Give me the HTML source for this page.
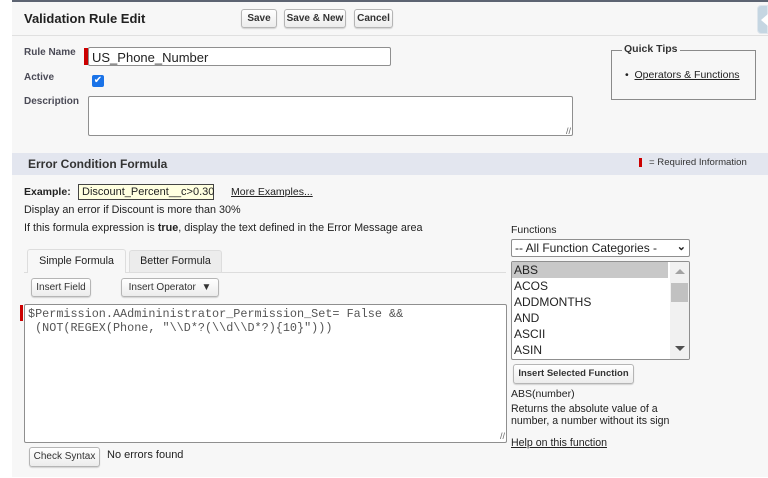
<!DOCTYPE html>
<html><head><style>
*{box-sizing:border-box;margin:0;padding:0}
body{width:768px;height:478px;background:#fff;font-family:"Liberation Sans",Arial,sans-serif;font-size:11px;color:#222;position:relative;overflow:hidden}
.a{position:absolute}
#pg{left:12px;top:0;width:756px;height:477px;background:#f7f7f7}
.btn{position:absolute;border:1px solid #b5b5b5;border-radius:3px;background:linear-gradient(#fff,#ececec);font-size:10px;font-weight:bold;color:#333;text-align:center;box-shadow:0 1px 1px rgba(0,0,0,.15)}
.lbl{position:absolute;font-size:10px;font-weight:bold;color:#4a4a56}
.in{position:absolute;background:#fff;border:1px solid #8f8f8f;border-radius:2px}
u{text-decoration:underline}
</style></head><body>
<div class="a" id="pg"></div>
<div class="a" style="left:12px;top:0;width:756px;height:2px;background:#5d6472"></div>
<div class="a" style="left:12px;top:35px;width:756px;height:1px;background:#e0e0e0"></div>
<div class="a" style="left:24px;top:11px;font-size:13px;font-weight:bold;color:#222">Validation Rule Edit</div>
<div class="btn" style="left:241px;top:9px;width:36px;height:19px;line-height:17px">Save</div>
<div class="btn" style="left:284px;top:9px;width:62px;height:19px;line-height:17px">Save &amp; New</div>
<div class="btn" style="left:354px;top:9px;width:39px;height:19px;line-height:17px">Cancel</div>
<div class="a" style="left:757px;top:5px;width:11px;height:29px;background:#c5d6e2;border:1px solid #dfe6ec;border-radius:4px 0 0 4px"></div>
<div class="a" style="left:761px;top:14px;width:0;height:0;border-top:6px solid transparent;border-bottom:6px solid transparent;border-right:7px solid #fff"></div>

<div class="lbl" style="left:24px;top:47px">Rule Name</div>
<div class="a" style="left:84px;top:48px;width:4px;height:17px;background:#c00"></div>
<div class="in" style="left:88px;top:47px;width:303px;height:19px;font-size:13px;padding:2px 3px;color:#222">US_Phone_Number</div>
<div class="lbl" style="left:24px;top:72px">Active</div>
<div class="a" style="left:92px;top:75px;width:12px;height:12px;background:#1a73e8;border-radius:2px;color:#fff;font-size:10px;line-height:12px;text-align:center">✔</div>
<div class="lbl" style="left:24px;top:96px">Description</div>
<div class="in" style="left:88px;top:96px;width:485px;height:40px"><span class="a" style="right:1px;bottom:-1px;font-size:9px;color:#666">//</span></div>

<div class="a" style="left:611px;top:50px;width:145px;height:50px;border:1px solid #8a8a8a"></div>
<div class="a" style="left:622px;top:43px;background:#f7f7f7;padding:0 2px;font-size:10.5px;font-weight:bold;color:#333">Quick Tips</div>
<div class="a" style="left:625px;top:69px;font-size:10.5px;color:#222">•&nbsp;&nbsp;<u>Operators &amp; Functions</u></div>

<div class="a" style="left:12px;top:153px;width:756px;height:22px;background:#e3e6ef"></div>
<div class="a" style="left:28px;top:157px;font-size:12px;font-weight:bold;color:#333">Error Condition Formula</div>
<div class="a" style="left:639px;top:158px;width:3px;height:9px;background:#c00"></div>
<div class="a" style="left:649px;top:157px;font-size:9.6px;color:#333">= Required Information</div>

<div class="a" style="left:24px;top:186px;font-size:10.5px;font-weight:bold">Example:</div>
<div class="a" style="left:78px;top:184px;width:136px;height:16px;background:#ffffe0;border:1px solid #444;font-size:11px;padding:1px 3px">Discount_Percent__c&gt;0.30</div>
<div class="a" style="left:231px;top:186px;font-size:10.5px"><u>More Examples...</u></div>
<div class="a" style="left:24px;top:204px;font-size:10.8px">Display an error if Discount is more than 30%</div>
<div class="a" style="left:24px;top:222px;font-size:10.8px">If this formula expression is <b>true</b>, display the text defined in the Error Message area</div>

<div class="a" style="left:24px;top:272px;width:482px;height:1px;background:#ddd"></div>
<div class="a" style="left:27px;top:249px;width:99px;height:24px;background:#f7f7f7;border:1px solid #ddd;border-bottom:none;border-radius:3px 3px 0 0;font-size:10.7px;text-align:center;line-height:22px">Simple Formula</div>
<div class="a" style="left:129px;top:250px;width:93px;height:22px;background:#ececec;border:1px solid #ddd;border-bottom:none;border-radius:3px 3px 0 0;font-size:10.7px;text-align:center;line-height:21px">Better Formula</div>
<div class="btn" style="left:31px;top:278px;width:60px;height:19px;line-height:17px;font-weight:normal">Insert Field</div>
<div class="btn" style="left:121px;top:278px;width:98px;height:19px;line-height:17px;font-weight:normal">Insert Operator&nbsp;&nbsp;▼</div>
<div class="a" style="left:20px;top:305px;width:3px;height:16px;background:#c00"></div>
<div class="in" style="left:24px;top:304px;width:483px;height:139px;font-family:'Liberation Mono',monospace;font-size:11.8px;line-height:14px;padding:2px 3px;color:#555;white-space:pre">$Permission.AAdmininistrator_Permission_Set= False &amp;&amp;
 (NOT(REGEX(Phone, "\\D*?(\\d\\D*?){10}")))<span class="a" style="right:1px;bottom:-1px;font-size:9px;color:#666;font-family:'Liberation Sans'">//</span></div>
<div class="btn" style="left:29px;top:447px;width:71px;height:20px;line-height:18px;font-weight:normal">Check Syntax</div>
<div class="a" style="left:107px;top:449px;font-size:11px">No errors found</div>

<div class="a" style="left:511px;top:224px;font-size:10.5px">Functions</div>
<div class="in" style="left:511px;top:239px;width:179px;height:18px;font-size:12px;padding:1px 3px;color:#222">-- All Function Categories -<span class="a" style="right:3px;top:0;font-size:11px;font-weight:bold">⌄</span></div>
<div class="in" style="left:511px;top:261px;width:179px;height:99px;font-size:12px;line-height:16px;overflow:hidden">
<div style="background:#c8c8c8;width:156px;padding-left:2px">ABS</div>
<div style="padding-left:2px">ACOS</div><div style="padding-left:2px">ADDMONTHS</div><div style="padding-left:2px">AND</div><div style="padding-left:2px">ASCII</div><div style="padding-left:2px">ASIN</div>
<div class="a" style="left:158px;top:0;width:19px;height:97px;background:#f1f1f1"></div>
<div class="a" style="left:163px;top:7px;border-left:5px solid transparent;border-right:5px solid transparent;border-bottom:5px solid #a3a3a3"></div>
<div class="a" style="left:159px;top:21px;width:17px;height:19px;background:#c1c1c1"></div>
<div class="a" style="left:163px;top:84px;border-left:5px solid transparent;border-right:5px solid transparent;border-top:5px solid #505050"></div>
</div>
<div class="btn" style="left:513px;top:364px;width:121px;height:20px;line-height:18px;font-size:9.5px">Insert Selected Function</div>
<div class="a" style="left:511px;top:388px;font-size:10.5px">ABS(number)</div>
<div class="a" style="left:511px;top:403px;font-size:10.6px;line-height:12px">Returns the absolute value of a<br>number, a number without its sign</div>
<div class="a" style="left:511px;top:437px;font-size:10.6px"><u>Help on this function</u></div>
</body></html>
